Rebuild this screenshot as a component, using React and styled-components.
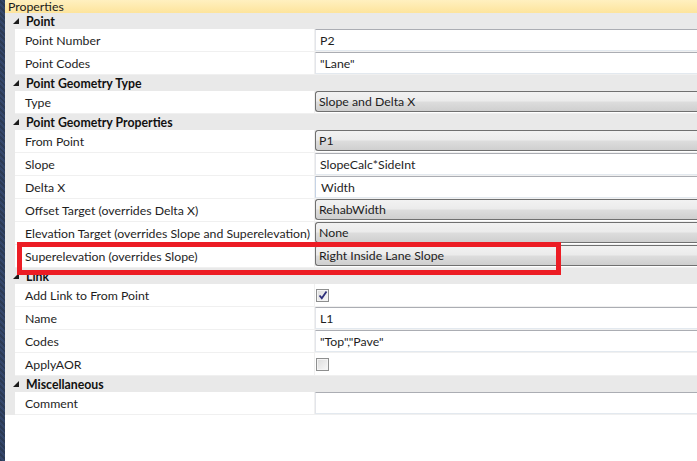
import React from 'react';
import styled, { createGlobalStyle } from 'styled-components';

const Global = createGlobalStyle`
  html, body { margin: 0; padding: 0; background: #fff; }
  body { overflow: hidden; font-family: Lato, "Noto Sans", sans-serif; font-size: 12.3px; color: #1e1e1e; }
`;

const Frame = styled.div`
  position: relative;
  display: flex;
  width: 697px;
  height: 461px;
  overflow: hidden;
`;

const SideStrip = styled.div`
  width: 5px;
  flex: none;
  background: repeating-linear-gradient(45deg, #2c3b55 0 2px, #34466a 2px 4px);
`;

const Panel = styled.div`
  flex: 1;
  display: flex;
  flex-direction: column;
  background: #fff;
  min-width: 0;
`;

const TitleBar = styled.div`
  height: 13px;
  line-height: 13px;
  padding-left: 3px;
  background: linear-gradient(#fff0c0, #fde49c);
  overflow: hidden;
  color: #1b1b1b;
`;

const Grid = styled.div`
  background: #e9e9e9;
`;

const Category = styled.div`
  height: 16px;
  display: flex;
  align-items: center;
  font-weight: bold;
  color: #111;
`;

const Toggle = styled.span`
  width: 20px;
  flex: none;
  display: flex;
  justify-content: center;
  padding-left: 1px;
  svg { display: block; }
`;

const Row = styled.div`
  height: 23px;
  display: grid;
  grid-template-columns: 10px 300px 1fr;
`;

const Label = styled.div`
  background: #fff;
  border-bottom: 1px solid #f0f0f0;
  border-right: 1px solid #f0f0f0;
  padding-left: 10px;
  display: flex;
  align-items: center;
  white-space: nowrap;
  overflow: hidden;
`;

const Value = styled.div`
  background: #fff;
  border-bottom: 1px solid #f0f0f0;
  display: flex;
  align-items: stretch;
  min-width: 0;
`;

const TextBox = styled.div`
  flex: 1;
  border-top: 1px solid #abadb3;
  border-left: 1px solid ${p => (p.$focus ? '#c5d3e6' : '#e3e5ea')};
  border-bottom: 1px solid #e3e9ef;
  padding-left: ${p => (p.$focus ? 5 : 4)}px;
  display: flex;
  align-items: center;
  white-space: nowrap;
  background: #fff;
`;

const Combo = styled.div`
  flex: 1;
  margin-bottom: 1px;
  border: 1px solid #707070;
  border-right: none;
  border-radius: 3px 0 0 3px;
  padding-left: 3px;
  display: flex;
  align-items: center;
  white-space: nowrap;
  background: linear-gradient(#f2f2f2 0%, #ebebeb 48%, #dddddd 52%, #cfcfcf 100%);
`;

const CheckCell = styled.div`
  flex: 1;
  display: flex;
  align-items: center;
  padding-left: 1px;
`;

const CheckBox = styled.span`
  width: 11px;
  height: 11px;
  border: 1px solid #8e8f8f;
  background: linear-gradient(135deg, #dcdcdc, #f8f8f8);
  box-shadow: inset 0 0 0 1px #f4f4f4;
  display: flex;
  align-items: center;
  justify-content: center;
`;

const Blank = styled.div`
  flex: 1;
  background: #fff;
`;

const Highlight = styled.div`
  position: absolute;
  left: 17px;
  top: 242px;
  width: 534px;
  height: 23px;
  border: 5px solid #ec1c24;
  pointer-events: none;
`;

const Triangle = () => (
  <svg width="6" height="6" viewBox="0 0 6 6">
    <polygon points="6,0 6,6 0,6" fill="#1a1a1a" />
  </svg>
);

const Tick = () => (
  <svg width="10" height="10" viewBox="0 0 10 10">
    <path d="M1.5 5.5 L3.8 8.2 L8.5 1.5" stroke="#2e2f7a" strokeWidth="1.8" fill="none" />
  </svg>
);

const data = [
  {
    name: 'Point',
    rows: [
      { label: 'Point Number', kind: 'text', value: 'P2' },
      { label: 'Point Codes', kind: 'text', value: '"Lane"' },
    ],
  },
  {
    name: 'Point Geometry Type',
    rows: [{ label: 'Type', kind: 'combo', value: 'Slope and Delta X' }],
  },
  {
    name: 'Point Geometry Properties',
    rows: [
      { label: 'From Point', kind: 'combo', value: 'P1' },
      { label: 'Slope', kind: 'text', value: 'SlopeCalc*SideInt' },
      { label: 'Delta X', kind: 'text', value: 'Width', focus: true },
      { label: 'Offset Target (overrides Delta X)', kind: 'combo', value: 'RehabWidth' },
      { label: 'Elevation Target (overrides Slope and Superelevation)', kind: 'combo', value: 'None' },
      { label: 'Superelevation (overrides Slope)', kind: 'combo', value: 'Right Inside Lane Slope' },
    ],
  },
  {
    name: 'Link',
    rows: [
      { label: 'Add Link to From Point', kind: 'check', value: true },
      { label: 'Name', kind: 'text', value: 'L1' },
      { label: 'Codes', kind: 'text', value: '"Top","Pave"' },
      { label: 'ApplyAOR', kind: 'check', value: false },
    ],
  },
  {
    name: 'Miscellaneous',
    rows: [{ label: 'Comment', kind: 'text', value: '' }],
  },
];

function Editor({ row }) {
  if (row.kind === 'combo') return <Combo>{row.value}</Combo>;
  if (row.kind === 'check') {
    return (
      <CheckCell>
        <CheckBox>{row.value && <Tick />}</CheckBox>
      </CheckCell>
    );
  }
  return <TextBox $focus={row.focus}>{row.value}</TextBox>;
}

export default function App() {
  return (
    <>
      <Global />
      <Frame>
        <SideStrip />
        <Panel>
          <TitleBar>Properties</TitleBar>
          <Grid>
            {data.map(cat => (
              <React.Fragment key={cat.name}>
                <Category>
                  <Toggle><Triangle /></Toggle>
                  {cat.name}
                </Category>
                {cat.rows.map(row => (
                  <Row key={row.label}>
                    <span />
                    <Label>{row.label}</Label>
                    <Value><Editor row={row} /></Value>
                  </Row>
                ))}
              </React.Fragment>
            ))}
          </Grid>
          <Blank />
        </Panel>
        <Highlight />
      </Frame>
    </>
  );
}
